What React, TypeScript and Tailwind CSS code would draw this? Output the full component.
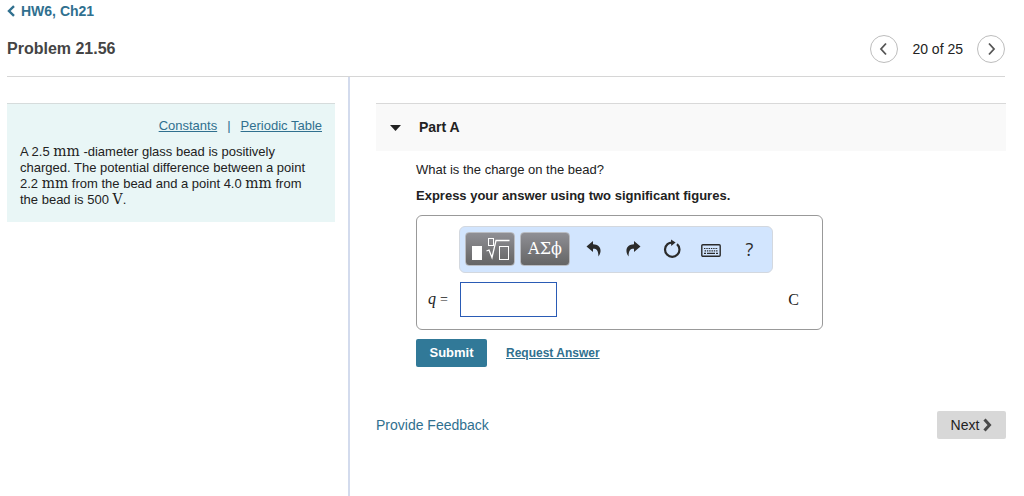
import type { ReactNode } from 'react';

const linkColor = 'text-[#30708f]';

function Unit({ children }: { children: ReactNode }) {
  return <span className="font-['DejaVu_Serif',serif] text-[14px] leading-none">{children}</span>;
}

function PagerButton({ label, points }: { label: string; points: string }) {
  return (
    <button
      type="button"
      aria-label={label}
      className="flex size-7 items-center justify-center rounded-full border border-[#bdbdbd] bg-white text-[#555]"
    >
      <svg viewBox="0 0 14 14" className="size-[14px]" fill="none" stroke="currentColor" strokeWidth="1.8">
        <polyline points={points} />
      </svg>
    </button>
  );
}

function Header() {
  return (
    <header className="mr-[19px] ml-[7px] border-b border-[#d6d6d6]">
      <a href="#assignment" className={`flex h-[22px] items-center gap-[6px] text-[14px] leading-4 font-bold ${linkColor}`}>
        <svg viewBox="0 0 8 12" className="h-3 w-2" fill="none" stroke="currentColor" strokeWidth="2.4">
          <polyline points="7,1.2 2,6 7,10.8" />
        </svg>
        HW6, Ch21
      </a>
      <div className="flex h-[54px] items-center justify-between">
        <h1 className="text-[16px] leading-5 font-bold text-[#444]">Problem 21.56</h1>
        <nav className="flex items-center gap-[14px] text-[14px] leading-4 text-[#222]">
          <PagerButton label="Previous item" points="9,1.5 4,7 9,12.5" />
          <span>20 of 25</span>
          <PagerButton label="Next item" points="5,1.5 10,7 5,12.5" />
        </nav>
      </div>
    </header>
  );
}

function ProblemPanel() {
  return (
    <aside className="w-[350px] shrink-0 border-r-2 border-[#d3dbed] pt-[26px] pr-[13px] pl-[7px]">
      <div className="border-t border-[#d6dcdc] bg-[#e9f6f6] px-[13px] pt-[14px] pb-[14px] text-[13px] leading-4 text-[#222]">
        <div className={`mb-[10px] flex justify-end gap-[10px] ${linkColor}`}>
          <a href="#constants" className="underline">Constants</a>
          <span>|</span>
          <a href="#periodic-table" className="underline">Periodic Table</a>
        </div>
        <p className="pr-2">
          A 2.5 <Unit>mm</Unit> -diameter glass bead is positively charged. The potential difference between a point
          2.2 <Unit>mm</Unit> from the bead and a point 4.0 <Unit>mm</Unit> from the bead is 500 <Unit>V</Unit>.
        </p>
      </div>
    </aside>
  );
}

function UndoIcon({ className = '' }: { className?: string }) {
  return (
    <svg viewBox="0 0 16 16" className={`size-4 ${className}`} fill="currentColor">
      <path d="M7 0 L0.5 5.5 L7 11 V7.8 C10.4 7.6 12.4 9.2 12.4 15.5 C17 9 13.8 3.5 7 3.3 Z" />
    </svg>
  );
}

function ResetIcon() {
  return (
    <svg viewBox="0 0 18 20" className="h-5 w-[18px]" fill="none" stroke="currentColor" strokeWidth="2.2">
      <path d="M14 5.2 A7.2 7.2 0 1 1 4.5 5.2 C5.8 4.1 7.2 3.6 9 3.6" />
      <path d="M8 0.5 L12.6 3.6 L8.2 7 Z" fill="currentColor" stroke="none" />
    </svg>
  );
}

function KeyboardIcon() {
  return (
    <svg viewBox="0 0 20 13" className="h-[13px] w-5" fill="none" stroke="currentColor">
      <rect x="0.8" y="0.8" width="18.4" height="11.4" rx="1" strokeWidth="1.4" />
      <path d="M3 4.5 H17" strokeDasharray="1.4 0.9" strokeWidth="1.2" />
      <path d="M3.6 6.8 H17" strokeDasharray="1.4 0.9" strokeWidth="1.2" />
      <path d="M3 9.3 H5 M6 9.3 H14 M15 9.3 H17" strokeWidth="1.2" />
    </svg>
  );
}

function TemplatesIcon() {
  return (
    <svg viewBox="0 0 40 24" className="h-6 w-10" fill="none" stroke="#fff">
      <rect x="2" y="9" width="10" height="14" fill="#fff" stroke="none" />
      <rect x="18.5" y="1.5" width="5" height="7" strokeWidth="1" />
      <path d="M16.5 14 L19 13 L22 20.5 L26 3.5 H39.5" strokeWidth="1.3" />
      <rect x="29.5" y="9.5" width="9" height="13" strokeWidth="1" />
    </svg>
  );
}

const paletteButton =
  'flex h-[34px] w-[50px] items-center justify-center rounded border border-[#b9bcc2] bg-linear-to-b from-[#8f8f95] to-[#656565] text-white';
const iconButton = 'flex h-8 w-[39px] items-center justify-center';

function Toolbar() {
  return (
    <div className="flex h-[47px] w-[314px] items-center rounded-md border border-[#d3d8df] bg-[#d2e5fe] pb-[2px] pl-[5px] text-[#2b2b2b]">
      <button type="button" aria-label="Templates" className={paletteButton}>
        <TemplatesIcon />
      </button>
      <button type="button" className={`mr-1 ml-[5px] font-['DejaVu_Serif',serif] text-[16px] ${paletteButton}`}>
        ΑΣϕ
      </button>
      <button type="button" aria-label="Undo" className={iconButton}>
        <UndoIcon />
      </button>
      <button type="button" aria-label="Redo" className={iconButton}>
        <UndoIcon className="-scale-x-100" />
      </button>
      <button type="button" aria-label="Reset" className={iconButton}>
        <ResetIcon />
      </button>
      <button type="button" aria-label="Keyboard shortcuts" className={`pt-1 ${iconButton}`}>
        <KeyboardIcon />
      </button>
      <button type="button" aria-label="Help" className={`font-['Open_Sans',sans-serif] text-[18px] ${iconButton}`}>
        ?
      </button>
    </div>
  );
}

function AnswerBox() {
  return (
    <div className="mt-[11px] w-[407px] rounded-md border border-[#999] pt-[10px] pb-3">
      <div className="pl-[42px]">
        <Toolbar />
      </div>
      <div className="mt-[9px] flex items-center pr-[23px] pl-[11px] font-['Liberation_Serif',serif] text-[16px] text-[#222]">
        <label htmlFor="answer" className="w-8">
          <i>q</i> <span className="text-[14px]">=</span>
        </label>
        <input id="answer" type="text" className="h-[35px] w-[97px] border border-[#2a5bb5] bg-white px-2 outline-none" />
        <span className="ml-auto">C</span>
      </div>
    </div>
  );
}

function PartA() {
  return (
    <main className="min-w-0 flex-1 pt-[26px] pr-[18px] pl-[26px]">
      <h2 className="border-t border-[#d9d9d9] bg-[#f9f9f9]">
        <button type="button" aria-expanded="true" className="flex h-[47px] w-full items-center gap-[18px] pl-[14px] text-[14px] font-bold text-[#222]">
          <svg viewBox="0 0 11 6" className="h-[6px] w-[11px]" fill="currentColor">
            <path d="M0 0 H11 L5.5 6 Z" />
          </svg>
          Part A
        </button>
      </h2>
      <div className="pl-[40px] text-[13px] leading-4 text-[#222]">
        <p className="mt-[11px]">What is the charge on the bead?</p>
        <p className="mt-[10px] font-bold">Express your answer using two significant figures.</p>
        <AnswerBox />
        <div className="mt-[9px] flex items-center gap-[19px] font-bold">
          <button type="button" className="h-7 w-[71px] rounded-xs bg-[#317998] text-[13px] text-white">
            Submit
          </button>
          <a href="#request-answer" className={`text-[12px] underline ${linkColor}`}>
            Request Answer
          </a>
        </div>
      </div>
      <footer className="mt-11 flex items-center justify-between text-[14px] leading-4">
        <a href="#feedback" className={linkColor}>
          Provide Feedback
        </a>
        <button type="button" className="flex h-7 w-[69px] items-center justify-center gap-1 rounded-xs bg-[#d8d8d8] text-[#222]">
          Next
          <svg viewBox="0 0 9 14" className="h-[14px] w-[9px]" fill="none" stroke="#4a4a4a" strokeWidth="3">
            <polyline points="1.5,1.5 6.5,7 1.5,12.5" />
          </svg>
        </button>
      </footer>
    </main>
  );
}

export default function App() {
  return (
    <div className="flex min-h-screen flex-col bg-white font-['Liberation_Sans',Arial,sans-serif]">
      <Header />
      <div className="flex flex-1">
        <ProblemPanel />
        <PartA />
      </div>
    </div>
  );
}
